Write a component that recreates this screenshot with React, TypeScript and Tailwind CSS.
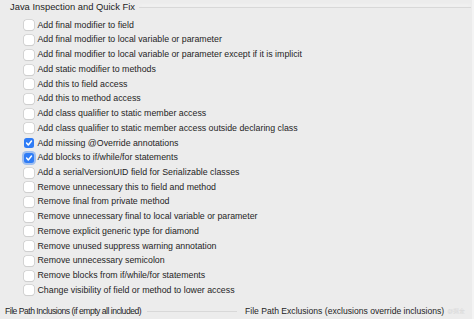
import React from "react";

const items: { label: string; checked?: boolean; focus?: boolean }[] = [
  { label: "Add final modifier to field" },
  { label: "Add final modifier to local variable or parameter" },
  { label: "Add final modifier to local variable or parameter except if it is implicit" },
  { label: "Add static modifier to methods" },
  { label: "Add this to field access" },
  { label: "Add this to method access" },
  { label: "Add class qualifier to static member access" },
  { label: "Add class qualifier to static member access outside declaring class" },
  { label: "Add missing @Override annotations", checked: true },
  { label: "Add blocks to if/while/for statements", checked: true, focus: true },
  { label: "Add a serialVersionUID field for Serializable classes" },
  { label: "Remove unnecessary this to field and method" },
  { label: "Remove final from private method" },
  { label: "Remove unnecessary final to local variable or parameter" },
  { label: "Remove explicit generic type for diamond" },
  { label: "Remove unused suppress warning annotation" },
  { label: "Remove unnecessary semicolon" },
  { label: "Remove blocks from if/while/for statements" },
  { label: "Change visibility of field or method to lower access" },
];

function Box({ checked, focus }: { checked?: boolean; focus?: boolean }) {
  if (checked) {
    return (
      <span
        className={
          "flex h-[10px] w-[10px] shrink-0 items-center justify-center rounded-[2.5px] bg-[#2f7cf6] " +
          (focus ? "shadow-[0_0_0_2px_rgba(47,124,246,0.4)]" : "")
        }
      >
        <svg width="10" height="10" viewBox="0 0 10 10">
          <path d="M2.6 5.1 L4.3 6.9 L7.5 3.1" fill="none" stroke="#ffffff" strokeWidth="1.5" strokeLinecap="round" strokeLinejoin="round" />
        </svg>
      </span>
    );
  }
  return (
    <span className="h-[10px] w-[10px] shrink-0 rounded-[2.5px] bg-white shadow-[0_0_0_0.6px_#c4c4c4,0_0.5px_1px_rgba(0,0,0,0.08)]" />
  );
}

export default function App() {
  return (
    <div
      className="relative h-[319px] w-[474px] overflow-hidden bg-[#ececec] text-[8.8px] text-[#1e1e1e]"
      style={{ fontFamily: '"Liberation Sans", Arial, sans-serif' }}
    >
      <div className="flex h-[15px] items-center pl-[10px] pr-[3px]">
        <span className="whitespace-nowrap text-[9.4px]">Java Inspection and Quick Fix</span>
        <div className="ml-[4px] h-[1px] flex-1 bg-[#d8d8d8] shadow-[0_-2px_3px_rgba(255,255,255,0.7)]" />
      </div>
      <div className="mt-[3px] flex flex-col pl-[24px]">
        {items.map((it) => (
          <div key={it.label} className="flex h-[14.72px] items-center gap-[3.5px]">
            <Box checked={it.checked} focus={it.focus} />
            <span className="whitespace-nowrap">{it.label}</span>
          </div>
        ))}
      </div>
      <div className="mt-[6.5px] flex h-[15px] items-center">
        <div className="flex w-[241px] shrink-0 items-center pl-[5px]">
          <span className="whitespace-nowrap text-[8.6px] tracking-[-0.5px]">File Path Inclusions (if empty all included)</span>
          <div className="ml-[6px] mr-[4px] h-[1px] flex-1 bg-[#d8d8d8]" />
        </div>
        <div className="flex items-center pl-[4px]">
          <span className="whitespace-nowrap text-[8.6px]">File Path Exclusions (exclusions override inclusions)</span>
          <span className="ml-[3px] whitespace-nowrap text-[6px] text-[#d4d4d4]">@掘金</span>
        </div>
      </div>
      <div className="absolute right-0 top-0 h-full w-[2px] bg-[#f4f4f4]" />
    </div>
  );
}
